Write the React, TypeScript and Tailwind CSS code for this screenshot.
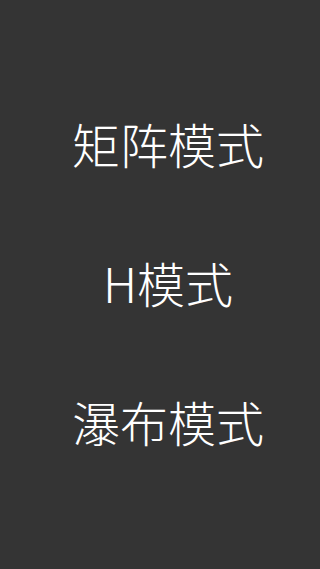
const modes = ["矩阵模式", "H模式", "瀑布模式"];

export default function App() {
  return (
    <div className="flex h-[569px] w-full flex-col items-center bg-[#343434] pl-[16px] pt-[73px] font-['Noto_Sans_CJK_SC',sans-serif] font-light text-white">
      {modes.map((m) => (
        <div key={m} className="flex h-[139px] items-center justify-center text-[48px] leading-none">
          {m}
        </div>
      ))}
    </div>
  );
}
